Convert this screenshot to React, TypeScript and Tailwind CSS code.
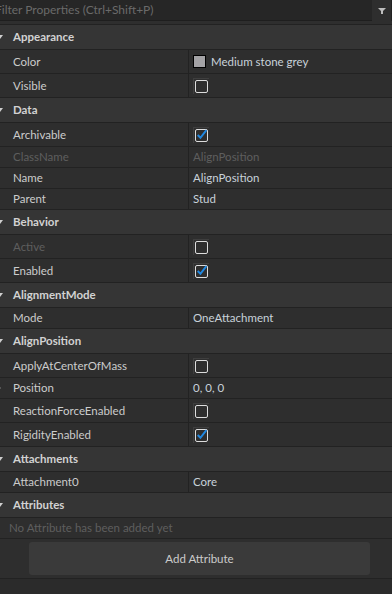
import type { ReactNode } from 'react';

type Row =
  | { kind: 'header'; label: string }
  | { kind: 'text'; label: string; value: string; disabled?: boolean; expand?: boolean }
  | { kind: 'check'; label: string; checked: boolean; disabled?: boolean }
  | { kind: 'color'; label: string; value: string };

const rows: Row[] = [
  { kind: 'header', label: 'Appearance' },
  { kind: 'color', label: 'Color', value: 'Medium stone grey' },
  { kind: 'check', label: 'Visible', checked: false },
  { kind: 'header', label: 'Data' },
  { kind: 'check', label: 'Archivable', checked: true },
  { kind: 'text', label: 'ClassName', value: 'AlignPosition', disabled: true },
  { kind: 'text', label: 'Name', value: 'AlignPosition' },
  { kind: 'text', label: 'Parent', value: 'Stud' },
  { kind: 'header', label: 'Behavior' },
  { kind: 'check', label: 'Active', checked: false, disabled: true },
  { kind: 'check', label: 'Enabled', checked: true },
  { kind: 'header', label: 'AlignmentMode' },
  { kind: 'text', label: 'Mode', value: 'OneAttachment' },
  { kind: 'header', label: 'AlignPosition' },
  { kind: 'check', label: 'ApplyAtCenterOfMass', checked: false },
  { kind: 'text', label: 'Position', value: '0, 0, 0', expand: true },
  { kind: 'check', label: 'ReactionForceEnabled', checked: false },
  { kind: 'check', label: 'RigidityEnabled', checked: true },
  { kind: 'header', label: 'Attachments' },
  { kind: 'text', label: 'Attachment0', value: 'Core' },
];

function Checkbox({ checked }: { checked: boolean }) {
  return (
    <div className="w-4 h-4 border-t border-l border-[#3e3e3e] flex items-center justify-center">
      <div className="w-[13px] h-[13px] rounded-[2px] border-[1.5px] border-[#dcdcdc] relative">
        {checked && (
          <svg viewBox="0 0 12 12" className="absolute -left-[1px] -top-[2px] w-[13px] h-[13px]">
            <path d="M2.5 6.5 L5 9 L10.5 2" fill="none" stroke="#1f87e0" strokeWidth="1.8" />
          </svg>
        )}
      </div>
    </div>
  );
}

function Arrow() {
  return (
    <svg viewBox="0 0 6 6" className="w-[6px] h-[6px] -ml-[3px] mr-[10px]">
      <path d="M0 1 L6 1 L3 5 Z" fill="#cfcfcf" />
    </svg>
  );
}

function PropRow({ label, disabled, expand, children, h }: { label: string; disabled?: boolean; expand?: boolean; children: ReactNode; h: string }) {
  return (
    <div className={`flex border-b border-[#222222] ${h}`}>
      <div className={`w-[188px] shrink-0 flex items-center pl-[13px] ${disabled ? 'text-[#5e5e5e]' : 'text-[#cccccc]'}`}>
        {expand && (
          <svg viewBox="0 0 6 6" className="w-[6px] h-[6px] -ml-[17px] mr-[11px]">
            <path d="M1 0 L5 3 L1 6 Z" fill="#9a9a9a" />
          </svg>
        )}
        {label}
      </div>
      <div className="flex-1 flex items-center border-l border-[#222222] pl-[4px]">{children}</div>
    </div>
  );
}

export default function App() {
  return (
    <div className="w-[392px] h-[594px] overflow-hidden bg-[#2e2e2e] text-[11.5px] flex flex-col" style={{ fontFamily: 'Lato, "Noto Sans", sans-serif' }}>
      {/* filter bar */}
      <div className="h-[25px] shrink-0 border-b border-[#222222] flex">
        <div className="w-[372px] h-[21px] bg-[#262626] border-b border-[#1e1e1e] overflow-hidden flex items-center">
          <span className="-ml-[5px] text-[#6a6a6a] whitespace-nowrap text-[12px]">Filter Properties (Ctrl+Shift+P)</span>
        </div>
        <div className="flex-1 h-[21px] flex items-center justify-center border-r border-[#222222]">
          <svg viewBox="0 0 8 6" className="w-[8px] h-[6px]">
            <path d="M0 0 L8 0 L5 3 L5 6 L3 6 L3 3 Z" fill="#bdbdbd" />
          </svg>
        </div>
      </div>

      {rows.map((r) => {
        if (r.kind === 'header') {
          return (
            <div key={r.label} className="h-[25px] shrink-0 bg-[#353535] border-b border-[#222222] flex items-center font-bold text-[#d2d2d2]">
              <Arrow />
              {r.label}
            </div>
          );
        }
        if (r.kind === 'check') {
          return (
            <PropRow key={r.label} label={r.label} disabled={r.disabled} h="h-6">
              <Checkbox checked={r.checked} />
            </PropRow>
          );
        }
        if (r.kind === 'color') {
          return (
            <PropRow key={r.label} label={r.label} h="h-6">
              <div className="w-[13px] h-[13px] bg-[#a3a2a5] border border-black mr-[5px]" />
              <span className="text-[#c9d2da]">{r.value}</span>
            </PropRow>
          );
        }
        return (
          <PropRow key={r.label} label={r.label} disabled={r.disabled} expand={r.expand} h="h-[21px]">
            <span className={r.disabled ? 'text-[#5e5e5e]' : 'text-[#c9d2da]'}>{r.value}</span>
          </PropRow>
        );
      })}

      <div className="h-[25px] shrink-0 bg-[#353535] border-b border-[#222222] flex items-center font-bold text-[#d2d2d2]">
        <Arrow />
        Attributes
      </div>
      <div className="h-[21px] shrink-0 border-b border-[#222222] flex items-center pl-[9px] text-[#5e5e5e]">
        No Attribute has been added yet
      </div>
      <div className="h-[40px] shrink-0 border-b border-[#222222] flex items-center pl-[29px] pr-[22px]">
        <button className="w-full h-[33px] rounded-[3px] bg-[#3a3a3a] text-[#cccccc]">Add Attribute</button>
      </div>
      <div className="flex-1 bg-[#2b2b2b]" />
    </div>
  );
}
